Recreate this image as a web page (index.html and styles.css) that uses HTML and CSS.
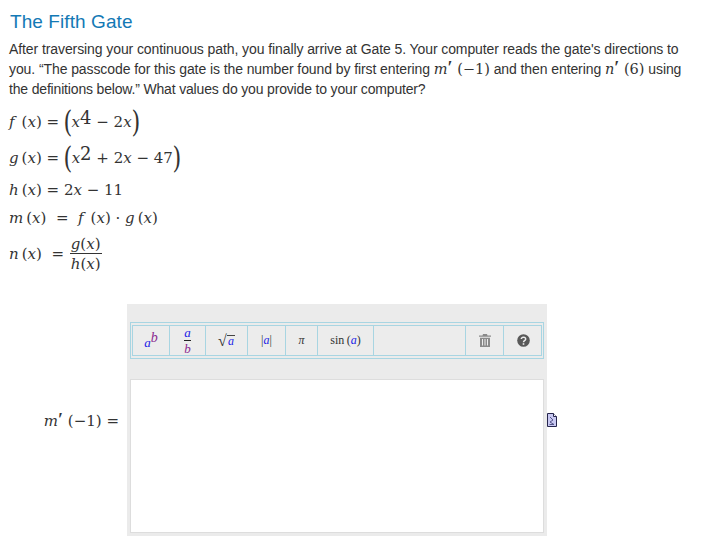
FILE: index.html
```html
<!DOCTYPE html>
<html lang="en">
<head>
<meta charset="utf-8">
<title>The Fifth Gate</title>
<link rel="stylesheet" href="styles.css">
</head>
<body>
<h1 class="title">The Fifth Gate</h1>
<p class="intro">After traversing your continuous path, you finally arrive at Gate 5. Your computer reads the gate's directions to you. “The passcode for this gate is the number found by first entering <span class="m inl"><i>m</i><b class="prime">′</b> (−1)</span> and then entering <span class="m inl"><i>n</i><b class="prime">′</b> (6)</span> using <span class="tight">the definitions below.” What values do you provide to your computer?</span></p>
<div class="defs">
  <div class="m def d-f"><i class="ff">f</i>&thinsp;(<i>x</i>) = <span class="bigp">(</span><i>x</i><sup class="pow">4</sup> − 2<i>x</i><span class="bigp">)</span></div>
  <div class="m def d-g"><i>g</i>&thinsp;(<i>x</i>) = <span class="bigp">(</span><i>x</i><sup class="pow">2</sup> + 2<i>x</i> − 47<span class="bigp">)</span></div>
  <div class="m def d-h"><i>h</i>&thinsp;(<i>x</i>) = 2<i>x</i> − 11</div>
  <div class="m def d-m"><i>m</i>&thinsp;(<i>x</i>) &nbsp;=&nbsp; <i class="ff">f</i>&thinsp;(<i>x</i>) · <i>g</i>&thinsp;(<i>x</i>)</div>
  <div class="m def d-n"><span><i>n</i>&thinsp;(<i>x</i>) &nbsp;=&nbsp;</span>
    <span class="frac"><span class="num"><i>g</i>(<i>x</i>)</span><span class="den"><i>h</i>(<i>x</i>)</span></span>
  </div>
</div>
<div class="answer">
  <div class="m label"><i>m</i><b class="prime">′</b> (−1) =</div>
  <div class="editor">
    <div class="toolbar">
      <div class="tb-inner">
        <div class="btn b1 tm"><i class="blue base">a</i><i class="purple expo">b</i></div>
        <div class="btn b2 tm"><span class="stack"><i class="blue">a</i><span class="bar"></span><i class="purple">b</i></span></div>
        <div class="btn b3 tm"><span class="root">√</span><span class="rad blue"><i>a</i></span></div>
        <div class="btn b4 tm">|<i class="blue">a</i>|</div>
        <div class="btn b5 tm"><i>π</i></div>
        <div class="btn b6 tm">sin&thinsp;(<i class="blue">a</i>)</div>
        <div class="btn b7"></div>
        <div class="btn b8">
          <svg class="ico" width="12" height="13" viewBox="0 0 12 14" preserveAspectRatio="none"><path fill="#8a8a8a" d="M4 0h4l.5 1.500H12V3H0V1.500h3.500zM1 4h10v10H1zM3 5.500v7h1v-7zm2.500 0v7h1v-7zm2.500 0v7h1v-7z" fill-rule="evenodd"/></svg>
        </div>
        <div class="btn b9">
          <svg class="ico" width="13" height="13" viewBox="0 0 13 13"><circle cx="6.500" cy="6.500" r="6.300" fill="#595959"/><path d="M4.300 5a2.200 1.900 0 1 1 3.300 1.700c-.8.500-1.100.8-1.100 1.600" fill="none" stroke="#eee" stroke-width="1.500"/><rect x="5.700" y="9.200" width="1.600" height="1.600" fill="#eee"/></svg>
        </div>
      </div>
    </div>
    <div class="input"></div>
  </div>
  <svg class="doc" width="10" height="14" viewBox="0 0 10 14"><path d="M.5.500h6l3 3v10H.5z" fill="#c9c9f2" stroke="#26264d"/><path d="M6.500.500v3h3" fill="#fff" stroke="#26264d"/><path d="M3 4l3 3-3 2 4 2.500H2.500" fill="none" stroke="#55558a"/></svg>
</div>
</body>
</html>
```
FILE: styles.css
```css
* { box-sizing: border-box; }
html, body { margin: 0; padding: 0; }
body {
  background: #fff;
  color: #333;
  font-family: "Liberation Sans", Arial, sans-serif;
  font-size: 14px;
  padding-left: 9px;
  width: 704px;
  height: 542px;
  overflow: hidden;
}
.title {
  margin: 0;
  padding-top: 10px;
  padding-left: 1px;
  height: 39px;
  font-size: 19px;
  letter-spacing: 0.08px;
  line-height: 23px;
  font-weight: 400;
  color: #1379b5;
}
.intro {
  margin: 0;
  width: 680px;
  line-height: 20px;
  letter-spacing: -0.09px;
}
.tight { letter-spacing: -0.17px; }
.m {
  font-family: "DejaVu Serif", "Liberation Serif", serif;
  color: #333;
}
.tm {
  font-family: "Liberation Serif", "DejaVu Serif", serif;
  color: #333;
}
.inl { font-size: 14.5px; line-height: 14px; letter-spacing: 0; }
.prime { font-family: "Liberation Serif", serif; font-weight: 700; font-size: 18px; line-height: 14px; }
.ff { margin-right: 4px; }
.defs {
  padding-top: 6px;
}
.def {
  font-size: 15px;
  display: flex;
  align-items: center;
  white-space: pre;
}
.d-f { height: 34px; }
.d-g { height: 37px; }
.d-h { height: 28px; }
.d-m { height: 27px; }
.d-n { height: 46px; }
.bigp { font-size: 30px; line-height: 30px; font-weight: 400; display: inline-block; transform: scaleX(.75); margin: 0 -2px; }
.pow { font-size: 18px; line-height: 10px; position: relative; top: -4px; vertical-align: baseline; }
.frac { display: inline-flex; flex-direction: column; align-items: center; margin-left: 1px; }
.num { padding: 0 1px; border-bottom: 1px solid #333; line-height: 18px; }
.den { line-height: 20px; }
.answer {
  display: flex;
  align-items: center;
  margin-top: 27px;
}
.label {
  width: 118px;
  padding-right: 8px;
  text-align: right;
  font-size: 15px;
  margin-top: 2px;
  white-space: pre;
}
.editor {
  width: 420px;
  height: 232px;
  background: #ebebeb;
  padding: 18px 3px 3px;
  display: flex;
  flex-direction: column;
}
.toolbar {
  height: 37px;
  border: 1px solid #a8d5e2;
  padding: 2px 1px;
}
.tb-inner {
  display: flex;
  height: 31px;
  border: 1px solid #a8d5e2;
  background: #ececec;
}
.btn {
  display: flex;
  align-items: center;
  justify-content: center;
  border-right: 1px solid #a8d5e2;
  font-size: 12px;
  flex: none;
  white-space: pre;
}
.b1 { width: 37px; }
.b2 { width: 36px; }
.b3 { width: 42px; }
.b4 { width: 38px; }
.b5 { width: 32px; }
.b6 { width: 56px; }
.b7 { width: 92px; }
.b8 { width: 38px; }
.b9 { width: 38px; border-right: 0; }
.blue { color: #2222e6; }
.purple { color: #8a2a90; }
.b1 { font-size: 13px; }
.base { position: relative; top: 2px; }
.expo { position: relative; top: -3px; font-size: 14px; }
.stack { display: flex; flex-direction: column; align-items: center; line-height: 13px; font-size: 13px; }
.bar { width: 7px; height: 1px; background: #222; margin: 1px 0; }
.root { font-size: 16px; }
.rad { border-top: 1px solid #444; line-height: 11px; font-size: 12px; padding: 0 1px; }
.ico { display: block; }
.input {
  margin-top: 20px;
  height: 154px;
  width: 414px;
  background: #fff;
  border: 1px solid #ddd;
}
.doc { flex: none; margin-top: 0; }
```
